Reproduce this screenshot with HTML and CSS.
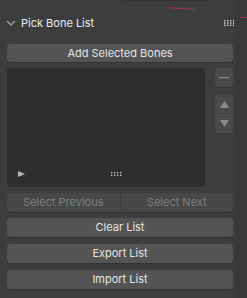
FILE: index.html
```html
<!DOCTYPE html>
<html lang="en">
  <head>
    <meta charset="UTF-8" />
    <title>Pick Bone List</title>
    <link rel="stylesheet" href="styles.css">
  </head>
  <body>
    <div class="panel">
      <span class="streak streak-a"></span>
      <span class="streak streak-b"></span>
      <span class="top-line"></span>

      <div class="header">
        <svg class="chevron" width="10" height="6" viewBox="0 0 10 6">
          <path d="M1 1 L5 5 L9 1" fill="none" stroke="#9a9a9a" stroke-width="1.4" />
        </svg>
        <span class="title">Pick Bone List</span>
        <svg class="grip" width="10" height="6" viewBox="0 0 10 6">
          <rect x="0" y="0" width="1.4" height="1.4" fill="#d8d8d8" />
          <rect x="3" y="0" width="1.4" height="1.4" fill="#d8d8d8" />
          <rect x="6" y="0" width="1.4" height="1.4" fill="#d8d8d8" />
          <rect x="9" y="0" width="1.4" height="1.4" fill="#d8d8d8" />
          <rect x="0" y="2.3" width="1.4" height="1.4" fill="#d8d8d8" />
          <rect x="3" y="2.3" width="1.4" height="1.4" fill="#d8d8d8" />
          <rect x="6" y="2.3" width="1.4" height="1.4" fill="#d8d8d8" />
          <rect x="9" y="2.3" width="1.4" height="1.4" fill="#d8d8d8" />
          <rect x="0" y="4.6" width="1.4" height="1.4" fill="#d8d8d8" />
          <rect x="3" y="4.6" width="1.4" height="1.4" fill="#d8d8d8" />
          <rect x="6" y="4.6" width="1.4" height="1.4" fill="#d8d8d8" />
          <rect x="9" y="4.6" width="1.4" height="1.4" fill="#d8d8d8" />
        </svg>
      </div>

      <div class="body">
        <div class="btn">Add Selected Bones</div>

        <div class="list-row">
          <div class="list">
            <div class="list-foot">
              <svg class="expand" width="7" height="6" viewBox="0 0 7 6">
                <path d="M0 0 L7 3 L0 6 Z" fill="#b5b5b5" />
              </svg>
              <svg class="list-grip" width="11" height="4" viewBox="0 0 11 4">
                <rect x="0" y="0" width="1.3" height="1.3" fill="#cfcfcf" />
                <rect x="3" y="0" width="1.3" height="1.3" fill="#cfcfcf" />
                <rect x="6" y="0" width="1.3" height="1.3" fill="#cfcfcf" />
                <rect x="9" y="0" width="1.3" height="1.3" fill="#cfcfcf" />
                <rect x="0" y="2.6" width="1.3" height="1.3" fill="#cfcfcf" />
                <rect x="3" y="2.6" width="1.3" height="1.3" fill="#cfcfcf" />
                <rect x="6" y="2.6" width="1.3" height="1.3" fill="#cfcfcf" />
                <rect x="9" y="2.6" width="1.3" height="1.3" fill="#cfcfcf" />
              </svg>
            </div>
          </div>
          <div class="side">
            <div class="side-btn">
              <svg width="10" height="2" viewBox="0 0 10 2">
                <rect x="0" y="0" width="10" height="1.2" fill="#8a8a8a" />
              </svg>
            </div>
            <div class="side-group">
              <div class="side-btn top">
                <svg width="9" height="7" viewBox="0 0 9 7">
                  <path d="M0 7 L4.5 0 L9 7 Z" fill="#8a8a8a" />
                </svg>
              </div>
              <div class="side-btn bottom">
                <svg width="9" height="7" viewBox="0 0 9 7">
                  <path d="M0 0 L4.5 7 L9 0 Z" fill="#8a8a8a" />
                </svg>
              </div>
            </div>
          </div>
        </div>

        <div class="pair">
          <div class="btn disabled left">Select Previous</div>
          <div class="btn disabled right">Select Next</div>
        </div>

        <div class="btn">Clear List</div>
        <div class="btn">Export List</div>
        <div class="btn">Import List</div>
      </div>
    </div>
  </body>
</html>
```

FILE: styles.css
```css
* {
  box-sizing: border-box;
}
body {
  margin: 0;
  background-color: #393939;
  font-family: Inter, "DejaVu Sans", sans-serif;
  font-size: 11px;
  color: #e4e4e4;
}
.panel {
  position: relative;
  width: 235px;
  height: 298px;
  background-color: #3d3d3d;
  overflow: visible;
}
.streak {
  position: absolute;
  height: 1px;
  background-color: #a8344f;
}
.streak-a {
  left: 170px;
  top: 8px;
  width: 24px;
  transform: rotate(4deg);
}
.streak-b {
  left: 241px;
  top: 17px;
  width: 6px;
}
.top-line {
  position: absolute;
  left: 123px;
  top: 0;
  width: 88px;
  height: 1px;
  background-color: #333;
}
.header {
  display: flex;
  align-items: center;
  height: 44px;
  padding: 2px 0 0 6px;
}
.chevron {
  margin-right: 5px;
}
.title {
  color: #ececec;
  font-size: 11px;
}
.grip {
  margin-left: auto;
  margin-right: 1px;
}
.body {
  display: flex;
  flex-direction: column;
  gap: 6px;
  padding: 0 2px 0 7px;
}
.btn {
  height: 19px;
  line-height: 19px;
  text-align: center;
  background-color: #545454;
  border-radius: 4px;
  box-shadow: 0 1px 0 #333;
}
.body > .btn:first-child {
  height: 18px;
  line-height: 18px;
}
.body > .btn + .btn {
  margin-top: 1px;
}
.list-row {
  display: flex;
  align-items: flex-start;
}
.list {
  width: 198px;
  height: 119px;
  background-color: #2e2e2e;
  border-radius: 3px;
  display: flex;
  flex-direction: column;
  justify-content: flex-end;
}
.list-foot {
  display: flex;
  align-items: center;
  height: 14px;
  margin-bottom: 6px;
  padding-left: 11px;
}
.list-grip {
  margin-left: 86px;
}
.side {
  display: flex;
  flex-direction: column;
  gap: 8px;
  margin-left: 10px;
  width: 18px;
}
.side-btn {
  height: 19px;
  display: flex;
  align-items: center;
  justify-content: center;
  background-color: #4a4a4a;
  border-radius: 4px;
  box-shadow: 0 1px 0 #353535;
}
.side-group {
  display: flex;
  flex-direction: column;
}
.side-btn.top {
  border-radius: 4px 4px 0 0;
  border-bottom: 1px solid #3f3f3f;
  box-shadow: none;
}
.side-btn.bottom {
  border-radius: 0 0 4px 4px;
}
.pair {
  display: flex;
  gap: 1px;
}
.btn.disabled {
  flex: 1;
  background-color: #474747;
  color: #7f7f7f;
}
.btn.left {
  border-radius: 4px 0 0 4px;
}
.btn.right {
  border-radius: 0 4px 4px 0;
}
```
